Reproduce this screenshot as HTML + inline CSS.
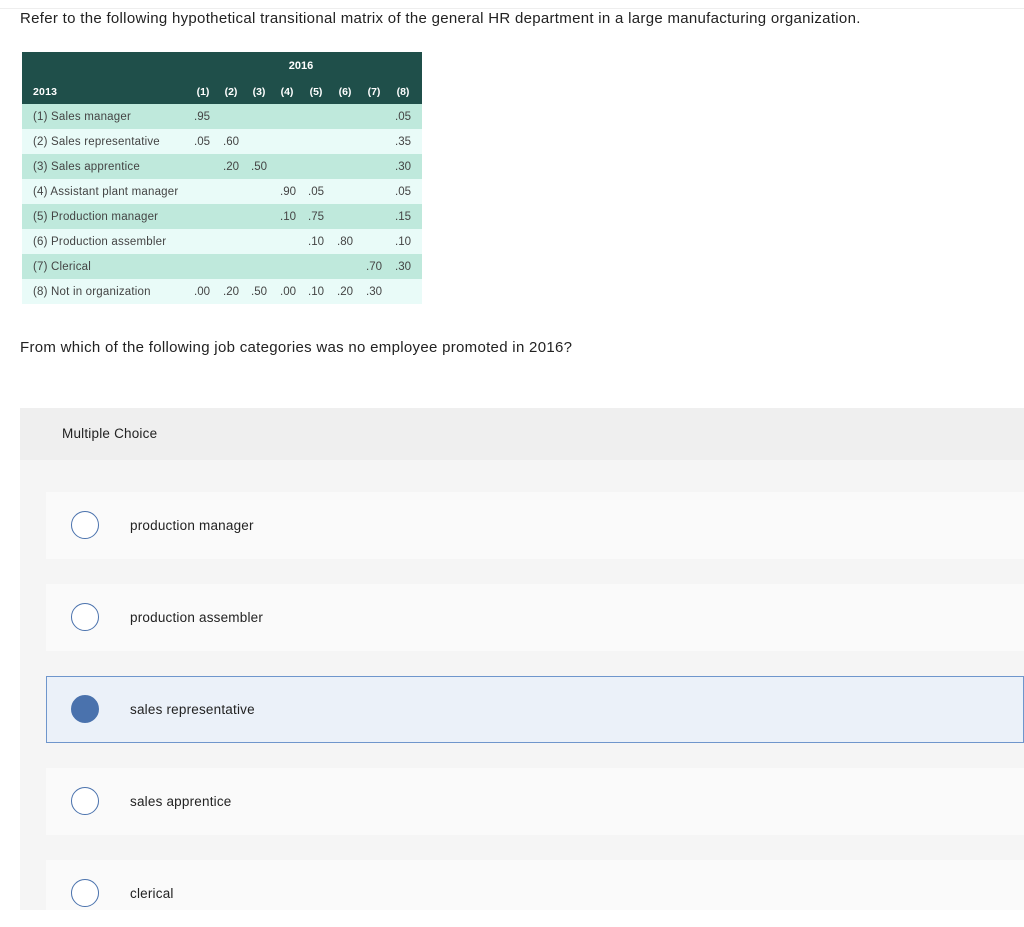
<!DOCTYPE html>
<html><head><style>
body{margin:0;width:1024px;height:927px;background:#fff;font-family:"Liberation Sans",sans-serif;color:#222;position:relative;overflow:hidden}
.abs{position:absolute}
.t{font-size:15px;letter-spacing:0.3px;white-space:nowrap}
.tbl{left:22px;top:52px;width:400px}
.h1{height:27px;background:#1f4f4a;color:#fff;font-weight:bold;font-size:11px}
.row{height:25px;position:relative;font-size:11.5px;color:#444}
.row span,.h1 span{position:absolute;top:50%;transform:translate(-50%,-50%)}
.lab{left:11px;transform:translate(0,-50%)!important;letter-spacing:0.2px}
.g{background:#bfe9dc}.w{background:#e9fbf8}
.panel{left:20px;top:408px;width:1004px;height:502px;background:#f5f5f5}
.ph{height:52px;background:#efefef}
.opt{left:46px;width:978px;height:67px;background:#fafafa}
.rad{position:absolute;left:25px;top:19px;width:26px;height:26px;border:1px solid #4a72ad;border-radius:50%;background:#fff}
.opt .tx{position:absolute;left:84px;top:26px;font-size:13.5px;letter-spacing:0.2px;color:#222}
</style></head><body>
<div class="abs" style="left:0;top:8px;width:1024px;height:1px;background:#eee"></div>
<div class="abs t" style="left:20px;top:10px">Refer to the following hypothetical transitional matrix of the general HR department in a large manufacturing organization.</div>
<div class="abs tbl">
<div class="h1" style="position:relative;height:27px"><span style="left:279px">2016</span></div>
<div class="h1 row" style="height:25px;color:#fff;font-weight:bold;font-size:10.5px"><span class="lab">2013</span><span style="left:181px">(1)</span><span style="left:209px">(2)</span><span style="left:237px">(3)</span><span style="left:265px">(4)</span><span style="left:294px">(5)</span><span style="left:323px">(6)</span><span style="left:352px">(7)</span><span style="left:381px">(8)</span></div>
<div class="row g"><span class="lab">(1) Sales manager</span><span style="left:180px">.95</span><span style="left:381px">.05</span></div>
<div class="row w"><span class="lab">(2) Sales representative</span><span style="left:180px">.05</span><span style="left:209px">.60</span><span style="left:381px">.35</span></div>
<div class="row g"><span class="lab">(3) Sales apprentice</span><span style="left:209px">.20</span><span style="left:237px">.50</span><span style="left:381px">.30</span></div>
<div class="row w"><span class="lab">(4) Assistant plant manager</span><span style="left:266px">.90</span><span style="left:294px">.05</span><span style="left:381px">.05</span></div>
<div class="row g"><span class="lab">(5) Production manager</span><span style="left:266px">.10</span><span style="left:294px">.75</span><span style="left:381px">.15</span></div>
<div class="row w"><span class="lab">(6) Production assembler</span><span style="left:294px">.10</span><span style="left:323px">.80</span><span style="left:381px">.10</span></div>
<div class="row g"><span class="lab">(7) Clerical</span><span style="left:352px">.70</span><span style="left:381px">.30</span></div>
<div class="row w"><span class="lab">(8) Not in organization</span><span style="left:180px">.00</span><span style="left:209px">.20</span><span style="left:237px">.50</span><span style="left:266px">.00</span><span style="left:294px">.10</span><span style="left:323px">.20</span><span style="left:352px">.30</span></div>
</div>
<div class="abs t" style="left:20px;top:339px">From which of the following job categories was no employee promoted in 2016?</div>
<div class="abs panel"><div class="ph"><div style="position:absolute;left:42px;top:18px;font-size:13.5px;letter-spacing:0.2px">Multiple Choice</div></div></div>
<div class="abs opt" style="top:492px"><div class="rad"></div><div class="tx">production manager</div></div>
<div class="abs opt" style="top:584px"><div class="rad"></div><div class="tx">production assembler</div></div>
<div class="abs opt" style="top:676px;background:#ebf1f9;border:1px solid #6f96cc;box-sizing:border-box"><div class="rad" style="left:24px;top:18px;background:#4a72ad"></div><div class="tx" style="left:83px;top:25px">sales representative</div></div>
<div class="abs opt" style="top:768px"><div class="rad"></div><div class="tx">sales apprentice</div></div>
<div class="abs opt" style="top:860px;height:50px"><div class="rad"></div><div class="tx">clerical</div></div>
</body></html>
